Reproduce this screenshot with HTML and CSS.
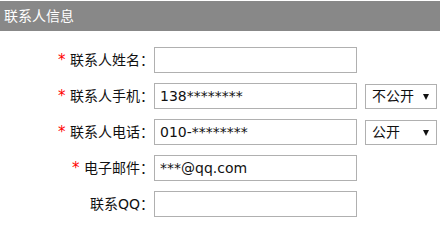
FILE: index.html
```html
<!DOCTYPE html>
<html lang="zh-CN">
<head>
<meta charset="utf-8">
<title>联系人信息</title>
<link rel="stylesheet" href="styles.css">
</head>
<body>
<div class="panel">
  <div class="panel-title">联系人信息</div>
  <form class="form">
    <div class="row">
      <label class="label"><span class="req">*</span> 联系人姓名：</label>
      <input class="field" type="text" value="">
    </div>
    <div class="row">
      <label class="label"><span class="req">*</span> 联系人手机：</label>
      <input class="field" type="text" value="138********">
      <span class="select-wrap">
        <select class="select"><option>不公开</option><option>公开</option></select>
      </span>
    </div>
    <div class="row">
      <label class="label"><span class="req">*</span> 联系人电话：</label>
      <input class="field" type="text" value="010-********">
      <span class="select-wrap">
        <select class="select"><option>公开</option><option>不公开</option></select>
      </span>
    </div>
    <div class="row">
      <label class="label"><span class="req">*</span> 电子邮件：</label>
      <input class="field" type="text" value="***@qq.com">
    </div>
    <div class="row">
      <label class="label">联系QQ：</label>
      <input class="field" type="text" value="">
    </div>
  </form>
</div>
</body>
</html>
```
FILE: styles.css
```css
html, body {
  margin: 0;
  padding: 0;
  background: #fff;
}

body {
  font-family: "DejaVu Sans", "Noto Sans CJK SC", sans-serif;
  font-size: 14px;
  color: #111;
}

.panel {
  padding-top: 1px;
}

.panel-title {
  height: 30px;
  line-height: 30px;
  background: #888888;
  color: #fff;
  padding-left: 4px;
  font-size: 14px;
}

.form {
  display: flex;
  flex-direction: column;
  gap: 10px;
  padding-top: 16px;
  margin: 0;
}

.row {
  display: flex;
  align-items: center;
  height: 26px;
}

.label {
  width: 154px;
  flex: none;
  text-align: right;
  line-height: 26px;
  white-space: nowrap;
}

.req {
  color: #f00;
  font-size: 15px;
}

.field {
  box-sizing: border-box;
  width: 203px;
  height: 26px;
  margin: 0;
  padding: 0 5px;
  border: 1px solid #b0b0b0;
  font-family: "DejaVu Sans", "Noto Sans CJK SC", sans-serif;
  font-size: 14px;
  color: #111;
  outline: none;
}

.select-wrap {
  position: relative;
  margin-left: 8px;
  display: block;
}

.select {
  display: block;
  box-sizing: border-box;
  width: 72px;
  height: 25px;
  margin: 0;
  padding: 0 0 0 6px;
  border: 1px solid #b0b0b0;
  border-radius: 0;
  background: #fff;
  -webkit-appearance: none;
  appearance: none;
  font-family: "DejaVu Sans", "Noto Sans CJK SC", sans-serif;
  font-size: 14px;
  color: #111;
  outline: none;
}

.select-wrap::after {
  content: "";
  position: absolute;
  right: 8px;
  top: 10px;
  border-left: 3px solid transparent;
  border-right: 3px solid transparent;
  border-top: 6px solid #111;
  pointer-events: none;
}
```
